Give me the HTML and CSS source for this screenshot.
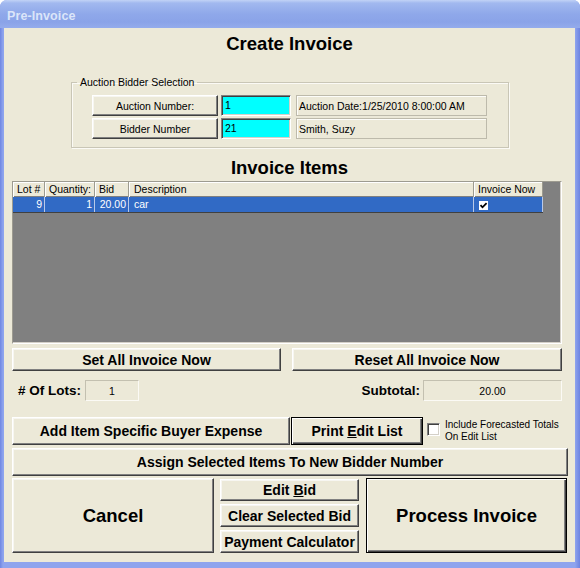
FILE: index.html
```html
<!DOCTYPE html>
<html>
<head>
<meta charset="utf-8">
<link rel="stylesheet" href="styles.css">
</head>
<body>
<div class="window">
  <div class="titlebar"><span class="title">Pre-Invoice</span></div>
  <div class="client">
    <h1 class="heading">Create Invoice</h1>

    <fieldset class="group">
      <legend>Auction Bidder Selection</legend>
      <div class="grow">
        <div class="btn gbtn">Auction Number:</div>
        <div class="cyan">1</div>
        <div class="ro">Auction Date:1/25/2010 8:00:00 AM</div>
      </div>
      <div class="grow">
        <div class="btn gbtn">Bidder Number</div>
        <div class="cyan">21</div>
        <div class="ro">Smith, Suzy</div>
      </div>
    </fieldset>

    <h2 class="heading heading-items">Invoice Items</h2>

    <div class="list">
      <div class="lrow lhead">
        <div class="c c-lot">Lot #</div>
        <div class="c c-qty">Quantity:</div>
        <div class="c c-bid">Bid</div>
        <div class="c c-desc">Description</div>
        <div class="c c-now">Invoice Now</div>
      </div>
      <div class="lrow sel">
        <div class="c c-lot num">9</div>
        <div class="c c-qty num">1</div>
        <div class="c c-bid num">20.00</div>
        <div class="c c-desc">car</div>
        <div class="c c-now"><span class="rowcheck"><svg width="9" height="9" viewBox="0 0 9 9"><path d="M1.5 4.2 L3.5 6.3 L7.6 2.1" fill="none" stroke="#000" stroke-width="1.8"/></svg></span></div>
      </div>
    </div>

    <div class="row r-set">
      <div class="btn b-set">Set All Invoice Now</div>
      <div class="btn b-reset">Reset All Invoice Now</div>
    </div>

    <div class="row r-lots">
      <div class="lbl lbl-lots"># Of Lots:</div>
      <div class="val val-lots">1</div>
      <div class="spacer"></div>
      <div class="lbl lbl-sub">Subtotal:</div>
      <div class="val val-sub">20.00</div>
    </div>

    <div class="row r-add">
      <div class="btn b-add">Add Item Specific Buyer Expense</div>
      <div class="btn def b-print"><span>Print <u>E</u>dit List</span></div>
      <div class="chk"></div>
      <div class="chklbl">Include Forecasted Totals<br>On Edit List</div>
    </div>

    <div class="row r-assign">
      <div class="btn b-assign">Assign Selected Items To New Bidder Number</div>
    </div>

    <div class="row r-bottom">
      <div class="btn big b-cancel">Cancel</div>
      <div class="mid">
        <div class="btn b-edit"><span>Edit <u>B</u>id</span></div>
        <div class="btn b-clear">Clear Selected Bid</div>
        <div class="btn b-pay">Payment Calculator</div>
      </div>
      <div class="btn big def b-process">Process Invoice</div>
    </div>
  </div>
</div>
</body>
</html>
```

FILE: styles.css
```css
* { box-sizing: border-box; }
html, body { margin: 0; padding: 0; }
body {
  width: 580px;
  height: 568px;
  overflow: hidden;
  background: #ffffff;
  font-family: "Liberation Sans", Arial, sans-serif;
  color: #000;
}

.window {
  width: 580px;
  height: 568px;
  display: flex;
  flex-direction: column;
  background: linear-gradient(90deg, #6f86e2 0, #8ea4ee 3px, #8ea4ee 575px, #6d84e0 580px);
  border-radius: 7px 7px 0 0;
  overflow: hidden;
}

.titlebar {
  height: 28px;
  flex: none;
  display: flex;
  align-items: center;
  padding: 4px 0 0 7px;
  background: linear-gradient(#c2d3f6 0, #a2b9ef 3px, #8fa8ea 14px, #8aa3e8 22px, #94acec 28px);
}
.title {
  font-weight: bold;
  font-size: 12.5px;
  color: #dbe5f9;
  letter-spacing: 0.1px;
}

.client {
  flex: 1;
  margin: 0 5px 6px 4px;
  background: #ece9d8;
  padding: 6px 0 0 8px;
  display: flex;
  flex-direction: column;
  align-items: flex-start;
}

.heading {
  margin: 0;
  width: 555px;
  height: 20px;
  line-height: 20px;
  font-size: 18.5px;
  font-weight: bold;
  text-align: center;
}
.heading-items { margin-top: 10px; }

/* group box */
.group {
  margin: 22px 0 0 59px;
  width: 438px;
  padding: 7px 0 8px 20px;
  border: 1px solid #c9c6b6;
  box-shadow: inset 1px 1px #fbfaf5, 1px 1px #fbfaf5;
  display: flex;
  flex-direction: column;
  gap: 2px;
  min-width: 0;
}
.group legend {
  font-size: 10.5px;
  line-height: 12px;
  padding: 0 3px;
  margin-left: -15px;
}
.grow {
  display: flex;
  height: 21px;
}
.gbtn {
  width: 126px;
  font-weight: normal !important;
  font-size: 10.5px !important;
}
.cyan {
  width: 70px;
  margin-left: 3px;
  background: #00ffff;
  border: 1px solid;
  border-color: #808080 #ffffff #ffffff #808080;
  box-shadow: inset 1px 1px #404040, inset -1px -1px #d4d0c8;
  font-size: 10.5px;
  padding: 0 0 1px 3px;
  display: flex;
  align-items: center;
}
.ro {
  width: 191px;
  margin-left: 5px;
  border: 1px solid #bdbaab;
  box-shadow: inset 1px 1px #fdfdf9;
  font-size: 10.5px;
  padding: 0 0 0 2px;
  display: flex;
  align-items: center;
}

/* buttons */
.btn {
  background: #ece9d8;
  border: 1px solid;
  border-color: #ffffff #404040 #404040 #ffffff;
  box-shadow: inset -1px -1px #808080, inset 1px 1px #f7f6f1;
  font-weight: bold;
  font-size: 14px;
  display: flex;
  align-items: center;
  justify-content: center;
  white-space: nowrap;
}
.btn.def {
  border-color: #000;
  box-shadow: inset 1px 1px #ffffff, inset -1px -1px #404040, inset -2px -2px #808080;
}
.btn.big { font-size: 18.5px; }

/* list view */
.list {
  margin-top: 3px;
  width: 550px;
  height: 163px;
  background: #808080;
  border: 1px solid;
  border-color: #9d9b90 #ffffff #ffffff #9d9b90;
  box-shadow: inset -1px -1px #d4d0c8;
}
.lrow {
  display: flex;
  height: 15px;
  width: 530px;
  font-size: 10.5px;
}
.lhead .c {
  background: #ece9d8;
  box-shadow: inset -1px 0 #9d9b90, inset 1px 1px #ffffff, inset 0 -1px #808080;
}
.c {
  height: 15px;
  line-height: 15px;
  padding-left: 4px;
  overflow: hidden;
  white-space: nowrap;
}
.c-lot { width: 32px; }
.c-qty { width: 50px; }
.c-bid { width: 34px; }
.c-desc { width: 345px; padding-left: 5px; }
.c-now { width: 69px; }
.sel {
  background: #316ac5;
  color: #ffffff;
  box-shadow: 0 1px #404040;
}
.sel .c { border-right: 1px solid #b9c9e8; }
.num { text-align: right; padding: 0 2px 0 0; }
.rowcheck {
  display: inline-block;
  width: 9px;
  height: 9px;
  margin: 4px 0 0 1px;
  background: #ffffff;
  vertical-align: top;
}
.rowcheck svg { display: block; }

/* rows */
.row { display: flex; }
.r-set {
  margin-top: 4px;
  width: 550px;
  height: 23px;
  justify-content: space-between;
}
.b-set { width: 269px; }
.b-reset { width: 270px; }

.r-lots {
  margin-top: 9px;
  width: 550px;
  height: 21px;
  align-items: center;
}
.lbl {
  font-weight: bold;
  font-size: 13.5px;
}
.lbl-lots { width: 73px; padding-left: 6px; }
.val {
  height: 21px;
  border: 1px solid;
  border-color: #c3c0b0 #fbfaf5 #fbfaf5 #c3c0b0;
  font-size: 10.5px;
  display: flex;
  align-items: center;
  justify-content: center;
}
.val-lots { width: 54px; }
.spacer { flex: 1; }
.lbl-sub { margin-right: 3px; }
.val-sub { width: 139px; }

.r-add {
  margin-top: 16px;
  height: 28px;
  align-items: flex-start;
}
.b-add { width: 278px; height: 28px; }
.b-print { width: 132px; height: 28px; margin-left: 1px; }
.chk {
  width: 13px;
  height: 13px;
  margin: 6px 0 0 4px;
  background: #ffffff;
  border: 1px solid;
  border-color: #808080 #ffffff #ffffff #808080;
  box-shadow: inset 1px 1px #404040, inset -1px -1px #d4d0c8;
}
.chklbl {
  margin: 2px 0 0 5px;
  font-size: 10px;
  line-height: 11.5px;
  color: #000;
}

.r-assign { margin-top: 3px; }
.b-assign { width: 556px; height: 28px; }

.r-bottom {
  margin-top: 2px;
  height: 75px;
}
.b-cancel { width: 202px; height: 75px; }
.mid {
  width: 139px;
  margin-left: 6px;
  padding-top: 1px;
  display: flex;
  flex-direction: column;
  gap: 3px;
}
.b-edit { height: 22px; }
.b-clear, .b-pay { height: 23px; }
.b-process { width: 201px; height: 75px; margin-left: 7px; }
```
